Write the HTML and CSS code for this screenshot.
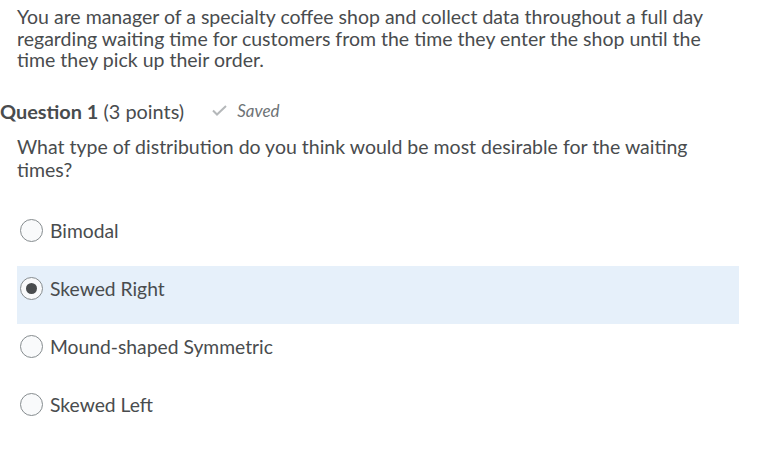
FILE: index.html
```html
<!DOCTYPE html>
<html lang="en">
    <head>
        <meta charset="UTF-8">
        <title>Question 1</title>
        <link rel="stylesheet" href="styles.css">
    </head>
    <body>
        <div class="page">
            <p class="intro">You are manager of a specialty coffee shop and collect data throughout a full day regarding waiting time for customers from the time they enter the shop until the time they pick up their order.</p>
            <div class="q-head">
                <span class="q-title"><b>Question 1</b> (3 points)</span>
                <span class="saved">
                    <svg width="15" height="11" viewBox="0 0 15 11"><path d="M1 5.5 L5 9.5 L14 1" fill="none" stroke="#b5b8ba" stroke-width="2"/></svg>
                    Saved
                </span>
            </div>
            <p class="q-text">What type of distribution do you think would be most desirable for the waiting times?</p>
            <div class="opts">
                <div class="opt"><span class="radio"></span>Bimodal</div>
                <div class="opt on"><span class="radio"></span>Skewed Right</div>
                <div class="opt"><span class="radio"></span>Mound-shaped Symmetric</div>
                <div class="opt"><span class="radio"></span>Skewed Left</div>
            </div>
        </div>
    </body>
</html>
```
FILE: styles.css
```css
body {
    margin: 0;
    background: #fff;
    font-family: Lato, "Liberation Sans", sans-serif;
    color: #494c4e;
}
.page {
    width: 740px;
}
.intro {
    margin: 6px 0 0 17px;
    font-size: 19.5px;
    line-height: 21.5px;
    width: 712px;
}
.q-head {
    display: flex;
    align-items: center;
    margin-top: 28px;
    font-size: 19.9px;
    line-height: 24px;
}
.q-title b {
    font-weight: 700;
}
.saved {
    margin-left: 28px;
    font-size: 17px;
    font-style: italic;
    color: #6e7376;
    display: flex;
    align-items: center;
    gap: 10px;
}
.q-text {
    margin: 12px 0 0 17px;
    font-size: 19.5px;
    line-height: 23px;
    width: 700px;
}
.opts {
    margin: 27px 0 0 17px;
    width: 722px;
}
.opt {
    display: flex;
    align-items: center;
    height: 58px;
    padding-bottom: 13px;
    box-sizing: border-box;
    font-size: 19.3px;
    gap: 7px;
    padding-left: 3px;
}
.opt.on {
    background: #e6f0fa;
}
.radio {
    width: 23px;
    height: 23px;
    box-sizing: border-box;
    border: 1px solid #868c8f;
    border-radius: 50%;
    background: #f9fafb;
    position: relative;
}
.opt.on .radio::after {
    content: "";
    position: absolute;
    left: 5px;
    top: 5px;
    width: 11px;
    height: 11px;
    border-radius: 50%;
    background: #494c4e;
}
```
